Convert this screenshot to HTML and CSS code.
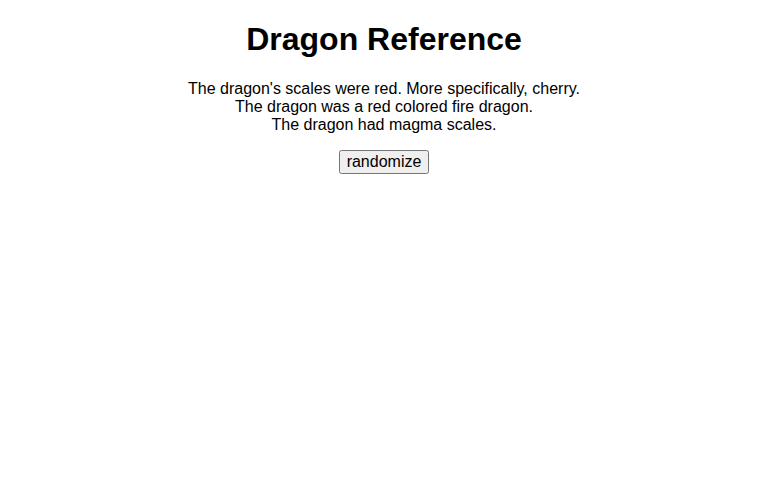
FILE: index.html
```html
<!DOCTYPE html>
<html>
<head>
<meta charset="utf-8">
<link rel="stylesheet" href="styles.css">
</head>
<body class="page">
<h1 class="title">Dragon Reference</h1>
<p class="desc">The dragon's scales were red. More specifically, cherry.<br>The dragon was a red colored fire dragon.<br>The dragon had magma scales.</p>
<button class="btn">randomize</button>
</body>
</html>
```
FILE: styles.css
```css
.page {
  margin: 0 8px 8px;
  font-family: "Liberation Sans", Arial, sans-serif;
  text-align: center;
  color: #000;
  background: #fff;
}
.title {
  font-size: 32px;
  margin: 21.44px 0;
}
.desc {
  font-size: 16px;
}
.btn {
  font-family: "Liberation Sans", Arial, sans-serif;
  font-size: 16px;
}
```
